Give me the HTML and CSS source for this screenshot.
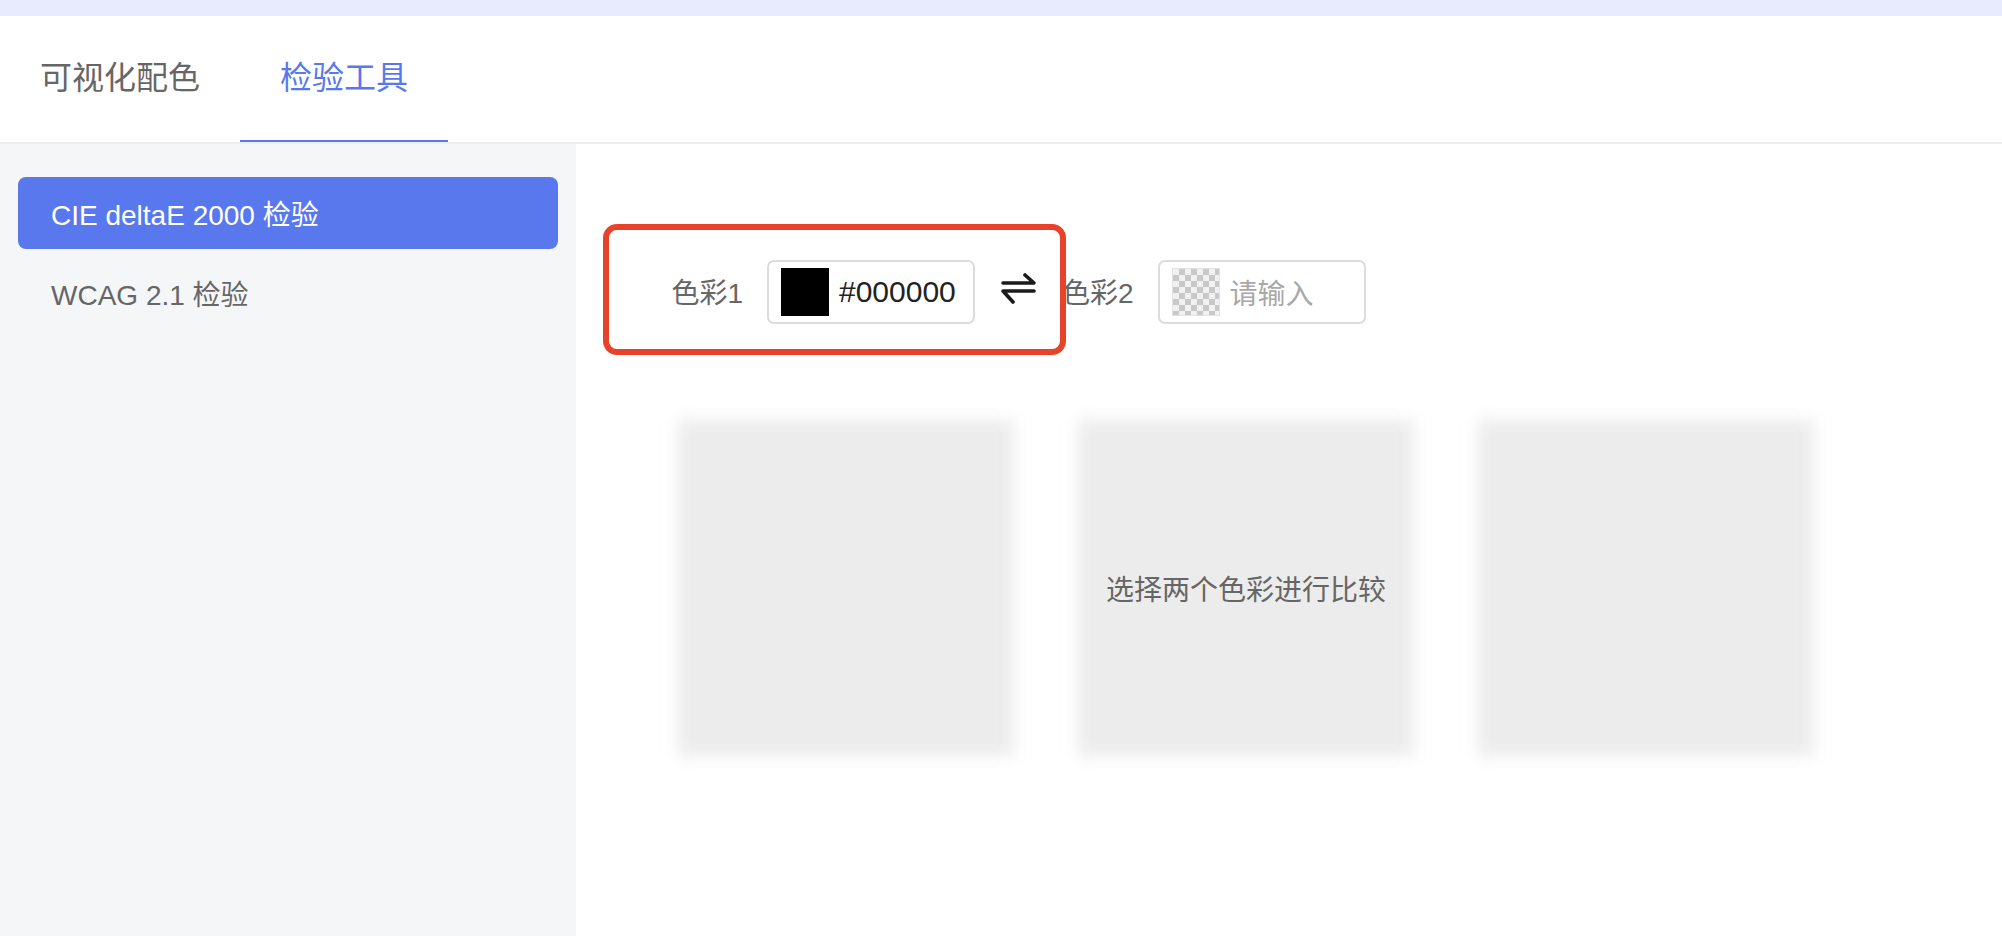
FILE: index.html
```html
<!DOCTYPE html>
<html lang="zh-CN">
<head>
  <meta charset="UTF-8" />
  <meta name="viewport" content="width=device-width, initial-scale=1.0"/>
  <title>检验工具</title>
  <link rel="stylesheet" href="styles.css">
</head>
<body>

  <div class="top-strip"></div>

  <header class="tabs">
    <div class="tab">可视化配色</div>
    <div class="tab active">检验工具</div>
  </header>

  <div class="layout">
    <aside class="sidebar">
      <div class="menu-item active">CIE deltaE 2000 检验</div>
      <div class="menu-item">WCAG 2.1 检验</div>
    </aside>

    <main class="content">
      <div class="compare-form">
        <span class="highlight"></span>

        <label class="form-label first">色彩1</label>
        <div class="color-input">
          <span class="swatch black"></span>
          <span class="value">#000000</span>
        </div>

        <!-- 交换两个色彩 -->
        <svg class="swap-icon" width="36" height="32" viewBox="0 0 36 32">
          <path d="M3 10 H34 L25 2" fill="none" stroke="#1a1a1a" stroke-width="3.6" stroke-linecap="round" stroke-linejoin="round"/>
          <path d="M34 18 H3 L13 29" fill="none" stroke="#1a1a1a" stroke-width="3.6" stroke-linecap="round" stroke-linejoin="round"/>
        </svg>

        <label class="form-label">色彩2</label>
        <div class="color-input">
          <span class="swatch empty"></span>
          <span class="placeholder">请输入</span>
        </div>
      </div>

      <div class="preview-row">
        <div class="preview"></div>
        <div class="preview"><span>选择两个色彩进行比较</span></div>
        <div class="preview"></div>
      </div>
    </main>
  </div>

</body>
</html>
```

FILE: styles.css
```css
:root {
  --accent: #5a78ed;
  --text: #666666;
  --border: #dcdcdc;
  --sidebar-bg: #f5f6f8;
  --card-bg: #ececec;
  --mark: #e8432a;
}

body {
  font-family: "Liberation Sans", "Noto Sans CJK SC", sans-serif;
  background-color: #ffffff;
  color: var(--text);
  margin: 0;
}

.top-strip {
  height: 16px;
  background-color: #e8ebfd;
}

/* 顶部标签 */
.tabs {
  display: flex;
  height: 126px;
  border-bottom: 2px solid #eeeeee;
}

.tab {
  padding: 0 40px;
  font-size: 32px;
  line-height: 124px;
  color: var(--text);
  border-bottom: 2px solid transparent;
}

.tab.active {
  color: var(--accent);
  border-bottom-color: var(--accent);
}

.layout {
  display: flex;
  min-height: calc(100vh - 144px);
}

/* 左侧菜单 */
.sidebar {
  width: 576px;
  flex-shrink: 0;
  box-sizing: border-box;
  padding: 33px 18px;
  background-color: var(--sidebar-bg);
  display: flex;
  flex-direction: column;
  gap: 8px;
}

.menu-item {
  height: 72px;
  line-height: 77px;
  padding-left: 33px;
  font-size: 28px;
  color: var(--text);
  border-radius: 8px;
}

.menu-item.active {
  background-color: var(--accent);
  color: #ffffff;
}

.content {
  flex: 1;
  padding: 116px 0 0 32px;
}

/* 色彩输入 */
.compare-form {
  position: relative;
  display: flex;
  align-items: center;
  height: 64px;
}

.highlight {
  position: absolute;
  left: -5px;
  top: -36px;
  width: 463px;
  height: 131px;
  box-sizing: border-box;
  border: 6px solid var(--mark);
  border-radius: 14px;
}

.form-label {
  font-size: 28px;
  color: var(--text);
  margin-right: 24px;
  margin-bottom: 2px;
}

.form-label.first {
  width: 135px;
  text-align: right;
}

.color-input {
  display: flex;
  align-items: center;
  gap: 10px;
  width: 208px;
  height: 64px;
  box-sizing: border-box;
  padding-left: 12px;
  border: 2px solid var(--border);
  border-radius: 7px;
}

.swatch {
  width: 48px;
  height: 48px;
  box-sizing: border-box;
}

.swatch.black {
  background-color: #000000;
}

.swatch.empty {
  border: 1px solid #e2e2e2;
  background-color: #f1f1f1;
  background-image: conic-gradient(#c8c8c8 25%, transparent 0 50%, #c8c8c8 0 75%, transparent 0);
  background-size: 12px 12px;
}

.value {
  font-size: 30px;
  color: #222222;
}

.placeholder {
  font-size: 28px;
  color: #a8a8a8;
}

.swap-icon {
  margin: 0 26px 6px 25px;
}

/* 预览区 */
.preview-row {
  display: flex;
  gap: 64px;
  margin: 96px 0 0 70px;
}

.preview {
  position: relative;
  width: 336px;
  height: 336px;
  display: flex;
  align-items: center;
  justify-content: center;
  font-size: 28px;
  color: var(--text);
}

.preview::before {
  content: "";
  position: absolute;
  inset: 0;
  background-color: var(--card-bg);
  filter: blur(8px);
}

.preview span {
  position: relative;
}
```
